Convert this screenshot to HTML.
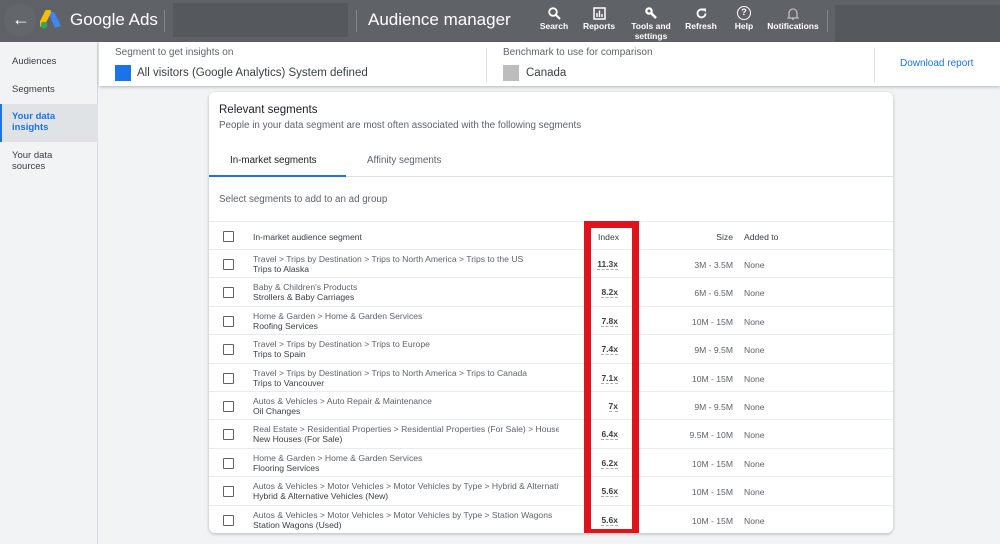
<!DOCTYPE html>
<html><head><meta charset="utf-8"><style>
*{margin:0;padding:0;box-sizing:border-box}
body{width:1000px;height:544px;overflow:hidden;background:#f1f3f4;font-family:"Liberation Sans",Arial,sans-serif;position:relative;color:#3c4043}
.hdr{position:absolute;left:0;top:0;width:1000px;height:42px;background:#5f6368}
.abs{position:absolute}
.side{position:absolute;left:0;top:42px;width:98px;height:502px;background:#f1f3f4;border-right:1px solid #dadce0}
.side div{position:absolute;left:12px;font-size:9.5px;color:#3c4043;line-height:11px}
.band{position:absolute;left:99px;top:42px;width:901px;height:44px;background:#fff;box-shadow:0 1px 3px rgba(0,0,0,.25)}
.card{position:absolute;left:209px;top:92px;width:684px;height:441px;background:#fff;border-radius:6px;box-shadow:0 1px 3px rgba(0,0,0,.25);overflow:hidden}
.row{position:absolute;left:0;width:684px;height:28.4px;border-top:1px solid #e8eaed;font-size:8.6px}
.cb{position:absolute;left:14px;top:9px;width:11px;height:11px;border:1.5px solid #5f6368;border-radius:1px}
.seg{position:absolute;left:44px;top:4px;line-height:10px;color:#5f6368;white-space:nowrap;width:306px;overflow:hidden}
.seg b{font-weight:normal;color:#3c4043;display:block}
.idx{position:absolute;right:275px;top:9px;font-weight:bold;color:#3c4043;font-size:8.5px;border-bottom:1px dashed #aaa}
.sz{position:absolute;right:160px;top:10px;color:#5f6368}
.ad{position:absolute;left:535px;top:10px;color:#5f6368}
.ic{position:absolute;top:5px;text-align:center;color:#fff;font-size:8.5px;font-weight:bold;line-height:10px}
.ic .g{height:16px;display:flex;justify-content:center;align-items:center}
</style></head><body>
<div class="hdr">
 <div class="abs" style="left:4px;top:4px;width:32px;height:32px;border-radius:50%;background:#63666a"></div>
 <div class="abs" style="left:12px;top:9px;color:#fff;font-size:18px">&#8592;</div>
 <svg class="abs" style="left:40px;top:10px" width="22" height="20" viewBox="0 0 22 20"><path d="M8 2 L14 2 L21 16 L15 18 Z" fill="#4285f4"/><path d="M8 2 L2 14" stroke="#fbbc04" stroke-width="6" stroke-linecap="round"/><circle cx="4" cy="15" r="3.3" fill="#34a853"/></svg>
 <div class="abs" style="left:70px;top:10px;color:#fff;font-size:17px">Google Ads</div>
 <div class="abs" style="left:164px;top:10px;width:1px;height:22px;background:#80868b"></div>
 <div class="abs" style="left:173px;top:3px;width:175px;height:34px;background:#55585c"></div>
 <div class="abs" style="left:356px;top:10px;width:1px;height:22px;background:#80868b"></div>
 <div class="abs" style="left:368px;top:10px;color:#fff;font-size:17px">Audience manager</div>
 <div class="ic" style="left:536px;width:36px"><div class="g"><svg width="13" height="13" viewBox="0 0 13 13"><circle cx="5" cy="5" r="3.8" fill="none" stroke="#fff" stroke-width="1.8"/><path d="M8 8l4 4" stroke="#fff" stroke-width="2"/></svg></div>Search</div>
 <div class="ic" style="left:580px;width:38px"><div class="g"><svg width="13" height="13" viewBox="0 0 13 13"><rect x="1" y="1" width="11" height="11" fill="none" stroke="#fff" stroke-width="1.5"/><path d="M4 10V6M6.5 10V3.5M9 10V7" stroke="#fff" stroke-width="1.4"/></svg></div>Reports</div>
 <div class="ic" style="left:628px;width:46px"><div class="g"><svg width="14" height="14" viewBox="0 0 14 14"><circle cx="5" cy="5" r="3.8" fill="#fff"/><path d="M6 6l6 6" stroke="#fff" stroke-width="2.6"/><circle cx="5" cy="5" r="1.5" fill="#5f6368"/></svg></div>Tools and<br>settings</div>
 <div class="ic" style="left:683px;width:36px"><div class="g"><svg width="13" height="13" viewBox="0 0 13 13"><path d="M10.5 6.5A4 4 0 1 1 9 3.3" fill="none" stroke="#fff" stroke-width="1.8"/><path d="M7 1.5h4v4z" fill="#fff"/></svg></div>Refresh</div>
 <div class="ic" style="left:730px;width:28px"><div class="g"><span style="display:inline-block;width:14px;height:14px;border:1.5px solid #fff;border-radius:50%;font-size:9px;line-height:11px">?</span></div>Help</div>
 <div class="ic" style="left:766px;width:54px"><div class="g"><svg width="12" height="13" viewBox="0 0 12 13"><path d="M2 10V6a4 4 0 0 1 8 0v4l1 1H1z" fill="none" stroke="#bbb" stroke-width="1.3"/><circle cx="6" cy="12" r="1" fill="#bbb"/></svg></div>Notifications</div>
 <div class="abs" style="left:827px;top:10px;width:1px;height:22px;background:#80868b"></div>
 <div class="abs" style="left:835px;top:5px;width:165px;height:37px;background:#55585c"></div>
</div>
<div class="side">
 <div style="top:14px">Audiences</div>
 <div style="top:42px">Segments</div>
 <div style="top:62px;left:0;width:98px;height:38px;background:#e0e3e6;border-left:2px solid #1a73e8"></div>
 <div style="top:69px;color:#1a73e8;font-weight:bold">Your data<br>insights</div>
 <div style="top:108px">Your data<br>sources</div>
</div>
<div class="band">
 <div class="abs" style="left:16px;top:5px;font-size:10px;color:#5f6368">Segment to get insights on</div>
 <div class="abs" style="left:16px;top:23px;width:16px;height:16px;background:#1a73e8"></div>
 <div class="abs" style="left:38px;top:25px;font-size:11.5px;color:#3c4043">All visitors (Google Analytics) System defined</div>
 <div class="abs" style="left:387px;top:6px;width:1px;height:34px;background:#e0e0e0"></div>
 <div class="abs" style="left:404px;top:5px;font-size:10px;color:#5f6368">Benchmark to use for comparison</div>
 <div class="abs" style="left:404px;top:23px;width:16px;height:16px;background:#bdbdbd"></div>
 <div class="abs" style="left:427px;top:25px;font-size:11.5px;color:#3c4043">Canada</div>
 <div class="abs" style="left:775px;top:6px;width:1px;height:34px;background:#e0e0e0"></div>
 <div class="abs" style="left:801px;top:16px;font-size:10px;color:#1a73e8">Download report</div>
</div>
<div class="card">
 <div class="abs" style="left:10px;top:12px;font-size:11.5px;color:#202124">Relevant segments</div>
 <div class="abs" style="left:10px;top:28px;font-size:9.8px;color:#5f6368">People in your data segment are most often associated with the following segments</div>
 <div class="abs" style="left:21px;top:63px;font-size:9.8px;color:#202124">In-market segments</div>
 <div class="abs" style="left:158px;top:63px;font-size:9.8px;color:#5f6368">Affinity segments</div>
 <div class="abs" style="left:0;top:84px;width:684px;height:1px;background:#e0e0e0"></div>
 <div class="abs" style="left:0;top:83px;width:137px;height:2px;background:#1a73e8"></div>
 <div class="abs" style="left:10px;top:102px;font-size:9.8px;color:#5f6368">Select segments to add to an ad group</div>
 <div class="row" style="top:129px;height:28px"><div class="cb"></div><div class="seg" style="top:10px;color:#3c4043">In-market audience segment</div><div class="abs" style="left:389px;top:10px">Index</div><div class="sz" style="color:#3c4043">Size</div><div class="ad" style="color:#3c4043">Added to</div></div>
 <div class="row" style="top:157px"><div class="cb"></div><div class="seg">Travel &gt; Trips by Destination &gt; Trips to North America &gt; Trips to the US<b>Trips to Alaska</b></div><div class="idx">11.3x</div><div class="sz">3M - 3.5M</div><div class="ad">None</div></div>
 <div class="row" style="top:185.4px"><div class="cb"></div><div class="seg">Baby &amp; Children's Products<b>Strollers &amp; Baby Carriages</b></div><div class="idx">8.2x</div><div class="sz">6M - 6.5M</div><div class="ad">None</div></div>
 <div class="row" style="top:213.8px"><div class="cb"></div><div class="seg">Home &amp; Garden &gt; Home &amp; Garden Services<b>Roofing Services</b></div><div class="idx">7.8x</div><div class="sz">10M - 15M</div><div class="ad">None</div></div>
 <div class="row" style="top:242.2px"><div class="cb"></div><div class="seg">Travel &gt; Trips by Destination &gt; Trips to Europe<b>Trips to Spain</b></div><div class="idx">7.4x</div><div class="sz">9M - 9.5M</div><div class="ad">None</div></div>
 <div class="row" style="top:270.6px"><div class="cb"></div><div class="seg">Travel &gt; Trips by Destination &gt; Trips to North America &gt; Trips to Canada<b>Trips to Vancouver</b></div><div class="idx">7.1x</div><div class="sz">10M - 15M</div><div class="ad">None</div></div>
 <div class="row" style="top:299px"><div class="cb"></div><div class="seg">Autos &amp; Vehicles &gt; Auto Repair &amp; Maintenance<b>Oil Changes</b></div><div class="idx">7x</div><div class="sz">9M - 9.5M</div><div class="ad">None</div></div>
 <div class="row" style="top:327.4px"><div class="cb"></div><div class="seg">Real Estate &gt; Residential Properties &gt; Residential Properties (For Sale) &gt; Houses (For Sale)<b>New Houses (For Sale)</b></div><div class="idx">6.4x</div><div class="sz">9.5M - 10M</div><div class="ad">None</div></div>
 <div class="row" style="top:355.8px"><div class="cb"></div><div class="seg">Home &amp; Garden &gt; Home &amp; Garden Services<b>Flooring Services</b></div><div class="idx">6.2x</div><div class="sz">10M - 15M</div><div class="ad">None</div></div>
 <div class="row" style="top:384.2px"><div class="cb"></div><div class="seg">Autos &amp; Vehicles &gt; Motor Vehicles &gt; Motor Vehicles by Type &gt; Hybrid &amp; Alternative Vehicles<b>Hybrid &amp; Alternative Vehicles (New)</b></div><div class="idx">5.6x</div><div class="sz">10M - 15M</div><div class="ad">None</div></div>
 <div class="row" style="top:412.6px"><div class="cb"></div><div class="seg">Autos &amp; Vehicles &gt; Motor Vehicles &gt; Motor Vehicles by Type &gt; Station Wagons<b>Station Wagons (Used)</b></div><div class="idx">5.6x</div><div class="sz">10M - 15M</div><div class="ad">None</div></div>
</div>
<div class="abs" style="left:584px;top:221px;width:55px;height:312px;border:7px solid #e0121c;border-bottom-width:4px"></div>
</body></html>
